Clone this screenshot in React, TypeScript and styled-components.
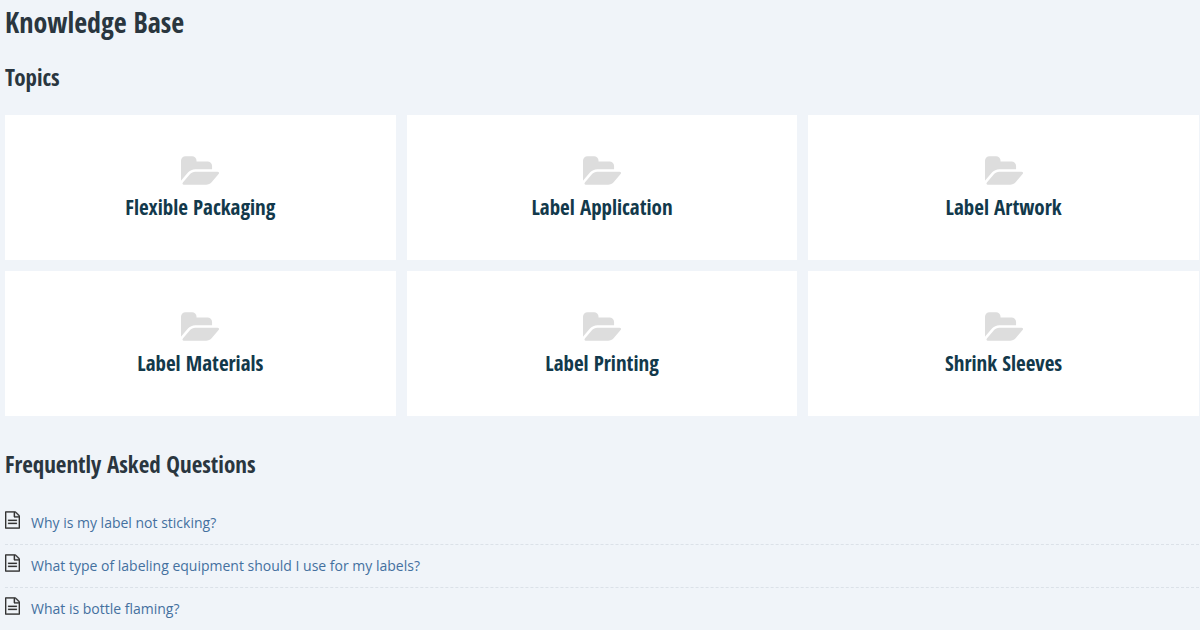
import React from "react";
import styled, { createGlobalStyle } from "styled-components";

const GlobalStyle = createGlobalStyle`
  * { box-sizing: border-box; }
  body {
    margin: 0;
    background: #f0f4f9;
    font-family: "Open Sans", sans-serif;
  }
`;

const condensed = `
  font-family: "Open Sans Condensed", "Open Sans", sans-serif;
  font-weight: 700;
`;

const Page = styled.main`
  padding: 3px 1px 0 5px;
`;

const Title = styled.h1`
  ${condensed}
  margin: 0;
  color: #2a363f;
  font-size: 28px;
  line-height: 38px;
`;

const Heading = styled.h2<{ $gap: number }>`
  ${condensed}
  margin: ${(p) => p.$gap}px 0 0;
  color: #2a363f;
  font-size: 23px;
  line-height: 30px;
`;

const Topics = styled.div`
  display: grid;
  grid-template-columns: repeat(3, 1fr);
  gap: 11px;
  margin-top: 23px;
`;

const Topic = styled.a`
  ${condensed}
  display: flex;
  flex-direction: column;
  align-items: center;
  gap: 8px;
  padding: 41px 16px 38px;
  background: #fff;
  color: #12394b;
  font-size: 21px;
  line-height: 29px;
  text-decoration: none;
`;

const FolderSvg = styled.svg`
  width: 38px;
  height: 29px;
  fill: #ddd;
`;

const FileSvg = styled.svg`
  width: 15px;
  height: 18px;
  fill: #333;
  stroke: #333;
  stroke-width: 24;
`;

const Questions = styled.ul`
  list-style: none;
  margin: 23px 0 0;
  padding: 0;
`;

const Question = styled.li`
  display: flex;
  align-items: flex-start;
  gap: 11px;
  padding: 9px 0;
  border-bottom: 1px dashed #dbe1e8;
`;

const QuestionLink = styled.a`
  color: #44709f;
  font-size: 14px;
  line-height: 24px;
  text-decoration: none;
`;

const FolderIcon = () => (
  <FolderSvg viewBox="64 128 1879 1408" aria-hidden="true">
    <path d="M1943 952q0 31-31 66l-336 396q-43 51-120.5 86.5t-143.5 35.5h-1088q-34 0-60.5-13t-26.5-43q0-31 31-66l336-396q43-51 120.5-86.5t143.5-35.5h1088q34 0 60.5 13t26.5 43zm-343-344v160h-832q-94 0-197 47.5t-164 119.5l-337 396-5 6q0-4-.5-12.5t-.5-12.5v-960q0-92 66-158t158-66h320q92 0 158 66t66 158v32h544q92 0 158 66t66 158z" />
  </FolderSvg>
);

const FileIcon = () => (
  <FileSvg viewBox="128 0 1536 1792" aria-hidden="true">
    <path d="M1596 380q28 28 48 76t20 88v1152q0 40-28 68t-68 28h-1344q-40 0-68-28t-28-68v-1600q0-40 28-68t68-28h896q40 0 88 20t76 48zm-444-244v376h376q-10-29-22-41l-313-313q-12-12-41-22zm384 1528v-1024h-416q-40 0-68-28t-28-68v-416h-768v1536h1280zM448 864h896v128h-896zM448 1184h896v128h-896z" />
  </FileSvg>
);

const topics = ["Flexible Packaging", "Label Application", "Label Artwork", "Label Materials", "Label Printing", "Shrink Sleeves"];
const questions = [
  "Why is my label not sticking?",
  "What type of labeling equipment should I use for my labels?",
  "What is bottle flaming?",
];

export default function App() {
  return (
    <Page>
      <GlobalStyle />
      <Title>Knowledge Base</Title>
      <Heading $gap={21}>Topics</Heading>
      <Topics>
        {topics.map((topic) => (
          <Topic href="#" key={topic}>
            <FolderIcon />
            {topic}
          </Topic>
        ))}
      </Topics>
      <Heading $gap={33}>Frequently Asked Questions</Heading>
      <Questions>
        {questions.map((question) => (
          <Question key={question}>
            <FileIcon />
            <QuestionLink href="#">{question}</QuestionLink>
          </Question>
        ))}
      </Questions>
    </Page>
  );
}
